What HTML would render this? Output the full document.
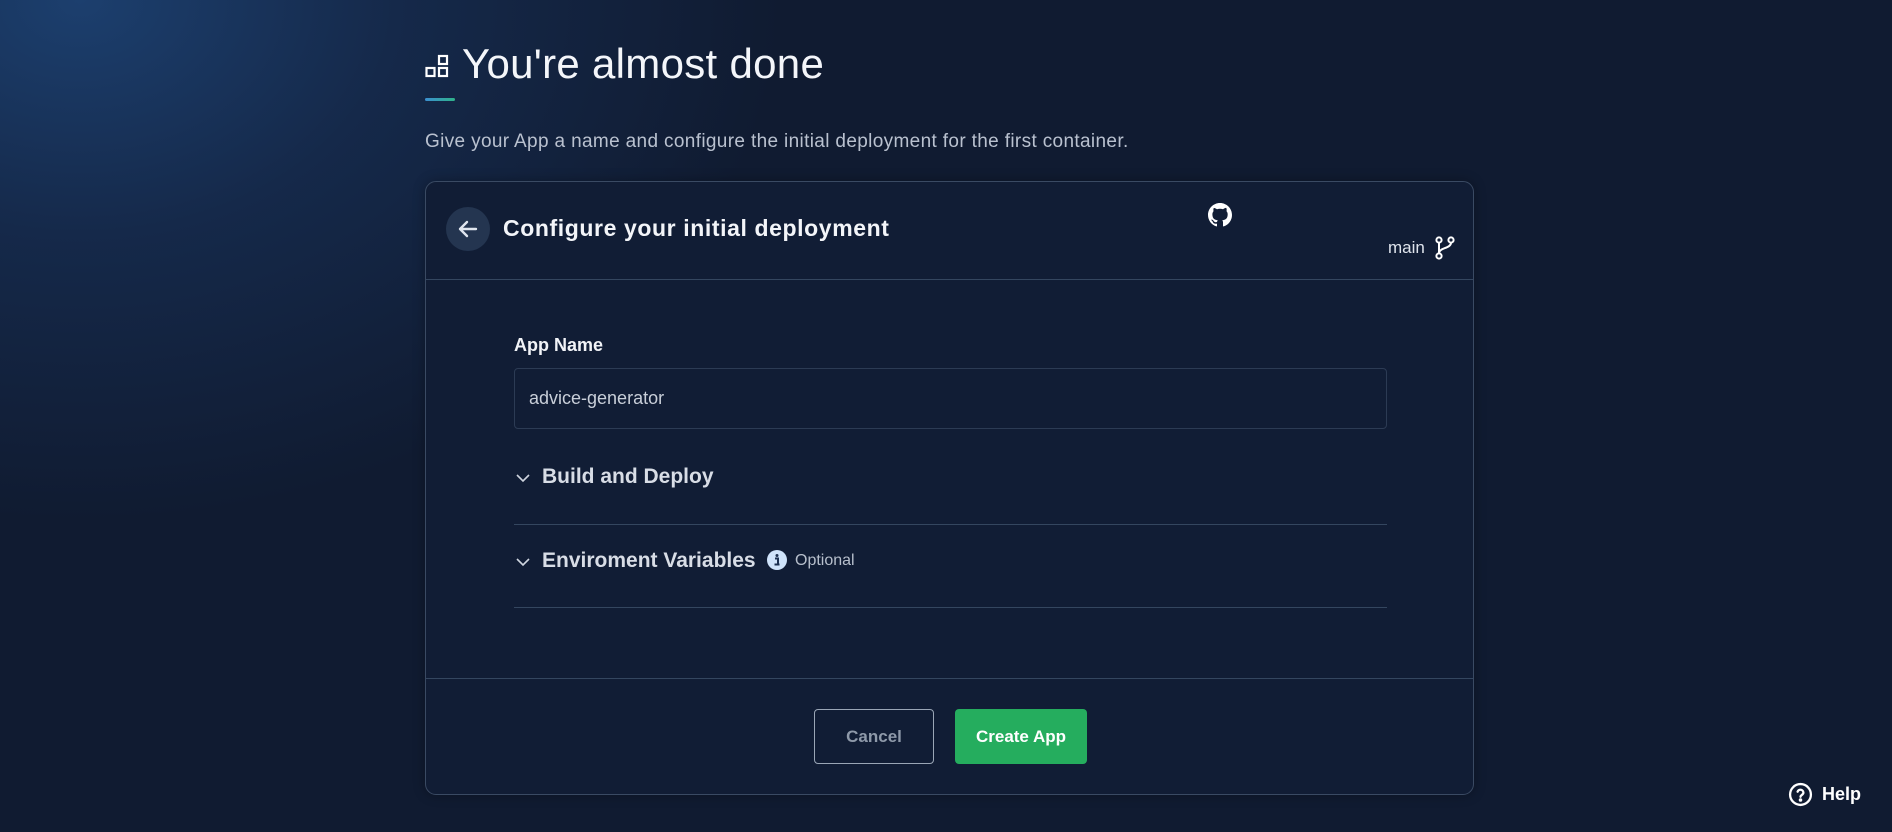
<!DOCTYPE html>
<html><head><meta charset="utf-8"><style>
*{margin:0;padding:0;box-sizing:border-box}
body{width:1892px;height:832px;overflow:hidden;font-family:"Liberation Sans",sans-serif;color:#fff;
background:radial-gradient(ellipse 700px 520px at 80px 0px,#1c3f6e 0%,#15294a 45%,rgba(16,27,49,0) 100%),#101b31;position:relative}
.a{position:absolute}
.title{left:462px;top:40px;font-size:42px;color:#f4f6fa;letter-spacing:.3px}
.ul{left:425px;top:98px;width:30px;height:3px;background:linear-gradient(90deg,#3b8fd0,#2fb38a);border-radius:2px}
.sub{left:425px;top:131px;font-size:19px;color:#b9c1cf;letter-spacing:.35px}
.card{left:425px;top:181px;width:1049px;height:614px;border:1px solid #3a4a63;border-radius:11px;background:#111d35;box-shadow:0 0 12px rgba(0,0,0,.3)}
.hl{left:0;width:100%;height:1px;background:#34465f}
.back{left:20px;top:25px;width:44px;height:44px;border-radius:50%;background:#243550}
.ht{left:77px;top:33px;font-size:23px;font-weight:bold;color:#f3f5f9;letter-spacing:.6px}
.lbl{font-size:18px;font-weight:bold;color:#f1f3f7}
.inp{left:88px;top:186px;width:873px;height:61px;border:1px solid #2c3b54;border-radius:4px;background:#111d35}
.sec{font-size:21px;font-weight:bold;color:#d8dde6}
.div{left:88px;width:873px;height:1px;background:#34465f}
.btn{top:527px;height:55px;border-radius:4px;font-size:17px;font-weight:bold;display:flex;align-items:center;justify-content:center}
</style></head><body>
<svg class="a" style="left:425px;top:54px" width="26" height="26" viewBox="0 0 26 26" fill="none" stroke="#fff" stroke-width="2.2"><rect x="1.5" y="14" width="8" height="8"/><rect x="14" y="14" width="8" height="8"/><rect x="14" y="2" width="8" height="8"/></svg>
<div class="a title">You're almost done</div>
<div class="a ul"></div>
<div class="a sub">Give your App a name and configure the initial deployment for the first container.</div>
<div class="a card">
  <div class="a back"><svg width="44" height="44" viewBox="0 0 44 44" fill="none" stroke="#dfe5ee" stroke-width="2.4" stroke-linecap="round" stroke-linejoin="round"><path d="M30 22H14M21 15l-7 7 7 7"/></svg></div>
  <div class="a ht">Configure your initial deployment</div>
  <svg class="a" style="left:782px;top:21px" width="24" height="24" viewBox="0 0 16 16" fill="#fff"><path d="M8 0C3.58 0 0 3.58 0 8c0 3.54 2.29 6.530 5.470 7.590.4.070.55-.170.55-.380 0-.190-.010-.820-.010-1.490-2.010.370-2.530-.490-2.690-.940-.090-.230-.480-.940-.820-1.130-.280-.150-.680-.520-.010-.530.630-.010 1.080.580 1.230.820.720 1.210 1.870.870 2.330.660.070-.520.280-.870.510-1.070-1.780-.2-3.640-.890-3.640-3.950 0-.870.310-1.590.820-2.150-.080-.2-.360-1.020.080-2.120 0 0 .670-.210 2.200.820.640-.180 1.320-.270 2-.270.680 0 1.360.090 2 .270 1.530-1.040 2.200-.820 2.200-.820.440 1.100.160 1.920.080 2.120.510.560.820 1.270.820 2.150 0 3.070-1.870 3.750-3.650 3.950.290.250.540.730.540 1.480 0 1.070-.010 1.930-.010 2.200 0 .210.150.460.550.380A8.013 8.013 0 0016 8c0-4.420-3.580-8-8-8z"/></svg>
  <div class="a" style="left:962px;top:56px;font-size:17px;color:#dfe4ec">main</div>
  <svg class="a" style="left:1008px;top:54px" width="22" height="24" viewBox="0 0 22 24" fill="none" stroke="#fff" stroke-width="2"><circle cx="5" cy="4" r="2.6"/><circle cx="5" cy="20" r="2.6"/><circle cx="17" cy="4" r="2.6"/><path d="M5 6.6v10.8M17 6.6c0 6-12 5-12 10.8"/></svg>
  <div class="a hl" style="top:97px"></div>
  <div class="a lbl" style="left:88px;top:153px">App Name</div>
  <div class="a inp"></div>
  <div class="a" style="left:103px;top:206px;font-size:18px;color:#c9cfd9">advice-generator</div>
  <svg class="a" style="left:89px;top:288px" width="16" height="16" viewBox="0 0 16 16" fill="none" stroke="#cfd5df" stroke-width="1.6"><path d="M2 5l6 6 6-6"/></svg>
  <div class="a sec" style="left:116px;top:283px">Build and Deploy</div>
  <div class="a div" style="top:342px"></div>
  <svg class="a" style="left:89px;top:372px" width="16" height="16" viewBox="0 0 16 16" fill="none" stroke="#cfd5df" stroke-width="1.6"><path d="M2 5l6 6 6-6"/></svg>
  <div class="a sec" style="left:116px;top:367px">Enviroment Variables</div>
  <svg class="a" style="left:341px;top:368px" width="20" height="20" viewBox="0 0 20 20"><circle cx="10" cy="10" r="10" fill="#cfe3fb"/><circle cx="10" cy="5.5" r="1.5" fill="#1b2f50"/><path d="M8 8.5h3v6h1.5M7.5 14.5h5" stroke="#1b2f50" stroke-width="2" fill="none"/></svg>
  <div class="a" style="left:369px;top:370px;font-size:16px;color:#b7bfcc">Optional</div>
  <div class="a div" style="top:425px"></div>
  <div class="a hl" style="top:496px"></div>
  <div class="a btn" style="left:388px;width:120px;border:1px solid #9aa6b6;color:#8e99a9">Cancel</div>
  <div class="a btn" style="left:529px;width:132px;background:#25ad5e;color:#fff">Create App</div>
</div>
<svg class="a" style="left:1788px;top:782px" width="25" height="25" viewBox="0 0 24 24" fill="none" stroke="#fff" stroke-width="2.2" stroke-linecap="round"><circle cx="12" cy="12" r="10"/><path d="M9.2 9.3a2.9 2.9 0 015.6.9c0 2-2.8 2.4-2.8 4"/><circle cx="12" cy="17.3" r=".6" fill="#fff"/></svg>
<div class="a" style="left:1822px;top:784px;font-size:18px;font-weight:bold">Help</div>
</body></html>
